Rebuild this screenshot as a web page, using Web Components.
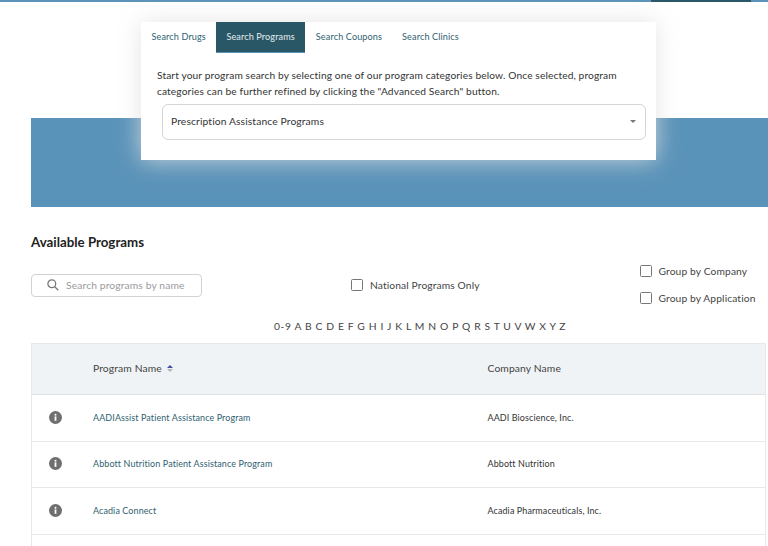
<!DOCTYPE html>
<html>
<head>
<meta charset="utf-8">
<title>Programs</title>
<style>
  html, body { margin: 0; height: 546px; overflow: hidden; background: #fff; }
  body { font-family: Lato, "Open Sans", sans-serif; color: #333; }
</style>
</head>
<body>
<top-bar></top-bar>
<search-hero>
  <search-card></search-card>
</search-hero>
<programs-section></programs-section>

<script>
class TopBar extends HTMLElement {
  constructor() {
    super();
    this.attachShadow({ mode: "open" });
  }
  connectedCallback() {
    this.shadowRoot.innerHTML = `
    <style>
      :host { display: flex; justify-content: flex-end; height: 2px; background: #5a93b9; padding-right: 17.5px; }
      div { width: 100px; background: #2a5766; }
    </style>
    <div></div>`;
  }
}

class SearchHero extends HTMLElement {
  constructor() {
    super();
    this.attachShadow({ mode: "open" });
  }
  connectedCallback() {
    this.shadowRoot.innerHTML = `
    <style>
      :host { display: block; position: relative; height: 205px; padding: 116px 0 0 31px; box-sizing: border-box; }
      .band { height: 89px; background: #5a93b9; }
    </style>
    <div class="band"></div>
    <slot></slot>`;
  }
}

class SearchCard extends HTMLElement {
  constructor() {
    super();
    this.attachShadow({ mode: "open" });
  }
  connectedCallback() {
    this.shadowRoot.innerHTML = `
    <style>
      :host { display: block; position: absolute; left: 141px; top: 20px; width: 515px; height: 138px; background: #fff; box-shadow: 0 0 22px rgba(225,225,225,.85); }
      nav { display: flex; height: 30.5px; }
      nav a { padding: 9px 10px 0; color: #2f6170; font-size: 9.1px; letter-spacing: .12px; box-sizing: border-box; height: 30.5px; white-space: nowrap; }
      nav a:first-child { padding-left: 10.5px; }
      nav a.on { padding: 9px 10.5px 0; margin-right: .5px; background: #2a5766; color: #e4edf0; border-bottom: 1px solid #5a93b9; }
      p { margin: 15.5px 0 0 16px; width: 480px; font-size: 10.2px; line-height: 15.5px; color: #333; letter-spacing: .12px; }
      .select { display: flex; justify-content: space-between; align-items: center; box-sizing: border-box; margin: 5px 0 0 21px; width: 484px; height: 35.5px; border: 1px solid #d5d5d5; border-radius: 6px; padding: 0 9px 1px 8px; font-size: 10.3px; color: #333; letter-spacing: .12px; }
      .caret { width: 0; height: 0; border-left: 3.5px solid transparent; border-right: 3.5px solid transparent; border-top: 3.5px solid #777; }
    </style>
    <nav>
      <a>Search Drugs</a>
      <a class="on">Search Programs</a>
      <a>Search Coupons</a>
      <a>Search Clinics</a>
    </nav>
    <p>Start your program search by selecting one of our program categories below. Once selected, program categories can be further refined by clicking the "Advanced Search" button.</p>
    <div class="select"><span>Prescription Assistance Programs</span><span class="caret"></span></div>`;
  }
}

class CheckOption extends HTMLElement {
  constructor() {
    super();
    this.attachShadow({ mode: "open" });
  }
  connectedCallback() {
    this.shadowRoot.innerHTML = `
    <style>
      :host { display: flex; align-items: center; gap: 7px; font-size: 10.25px; letter-spacing: .12px; color: #444; white-space: nowrap; }
      i { width: 10px; height: 10px; border: 1px solid #777; border-radius: 1.5px; }
    </style>
    <i></i><slot></slot>`;
  }
}

class ProgramRow extends HTMLElement {
  constructor() {
    super();
    this.attachShadow({ mode: "open" });
  }
  connectedCallback() {
    this.shadowRoot.innerHTML = `
    <style>
      :host { display: grid; grid-template-columns: 61px 394.5px 1fr; align-items: center; height: 46.67px; box-sizing: border-box; padding-bottom: 1px; border-bottom: 1px solid #e8e8e8; font-size: 8.95px; letter-spacing: .12px; }
      .icon { margin-left: 16.5px; width: 13px; height: 13px; }
      a { color: #2f6170; }
      span { color: #333; }
    </style>
    <svg class="icon" viewBox="0 0 13 13"><circle cx="6.5" cy="6.5" r="6.5" fill="#6f6f6f"/><rect x="5.6" y="5.4" width="1.8" height="4.4" fill="#fff"/><circle cx="6.5" cy="3.8" r="1" fill="#fff"/></svg>
    <a>${this.getAttribute("name")}</a>
    <span>${this.getAttribute("company")}</span>`;
  }
}

class ProgramsSection extends HTMLElement {
  constructor() {
    super();
    this.attachShadow({ mode: "open" });
  }
  connectedCallback() {
    const letters = "0-9 A B C D E F G H I J K L M N O P Q R S T U V W X Y Z";
    this.shadowRoot.innerHTML = `
    <style>
      :host { display: block; padding: 27px 2px 0 31px; }
      h2 { margin: 0; font-size: 13.3px; line-height: 16px; font-weight: 700; color: #222; }
      .filters { display: grid; grid-template-columns: 320px 288.5px 1fr; align-items: center; height: 54px; margin-top: 8px; }
      .search { display: flex; align-items: center; gap: 7px; box-sizing: border-box; width: 171px; height: 23px; border: 1px solid #d2d2d2; border-radius: 4px; padding-left: 15px; font-size: 10.3px; color: #9a9a9a; letter-spacing: .12px; }
      .groups { display: flex; flex-direction: column; gap: 15px; padding-bottom: 2px; }
      .letters { margin-top: 6.5px; text-align: center; font-size: 10.3px; line-height: 14px; letter-spacing: .63px; color: #444; padding-left: 43px; }
      .table { margin-top: 10px; border-left: 1px solid #e8e8e8; border-right: 1px solid #e8e8e8; border-top: 1px solid #e8e8e8; }
      .head { display: grid; grid-template-columns: 61px 394.5px 1fr; align-items: center; height: 51.5px; box-sizing: border-box; padding-bottom: 1px; background: #f0f3f5; border-bottom: 1px solid #e2e2e2; font-size: 10.3px; letter-spacing: .12px; color: #444; }
      .head span:nth-child(2) { display: flex; align-items: center; gap: 5px; }
      .sort { display: inline-flex; flex-direction: column; gap: 1px; }
      .sort b { width: 0; height: 0; border-left: 3px solid transparent; border-right: 3px solid transparent; }
      .sort .up { border-bottom: 3px solid #3d4f9f; }
      .sort .down { border-top: 3px solid #b5b5b5; }
      .more { height: 11px; }
    </style>
    <h2>Available Programs</h2>
    <div class="filters">
      <div class="search">
        <svg width="12" height="12" viewBox="0 0 12 12" fill="none" stroke="#777" stroke-width="1.3"><circle cx="4.8" cy="4.8" r="3.9"/><path d="M7.7 7.7 11.3 11.3"/></svg>
        <span>Search programs by name</span>
      </div>
      <check-option>National Programs Only</check-option>
      <div class="groups">
        <check-option>Group by Company</check-option>
        <check-option>Group by Application</check-option>
      </div>
    </div>
    <div class="letters">${letters}</div>
    <div class="table">
      <div class="head"><span></span><span>Program Name <span class="sort"><b class="up"></b><b class="down"></b></span></span><span>Company Name</span></div>
      <program-row name="AADIAssist Patient Assistance Program" company="AADI Bioscience, Inc."></program-row>
      <program-row name="Abbott Nutrition Patient Assistance Program" company="Abbott Nutrition"></program-row>
      <program-row name="Acadia Connect" company="Acadia Pharmaceuticals, Inc."></program-row>
      <div class="more"></div>
    </div>`;
  }
}

customElements.define("top-bar", TopBar);
customElements.define("search-hero", SearchHero);
customElements.define("search-card", SearchCard);
customElements.define("check-option", CheckOption);
customElements.define("program-row", ProgramRow);
customElements.define("programs-section", ProgramsSection);
</script>
</body>
</html>
